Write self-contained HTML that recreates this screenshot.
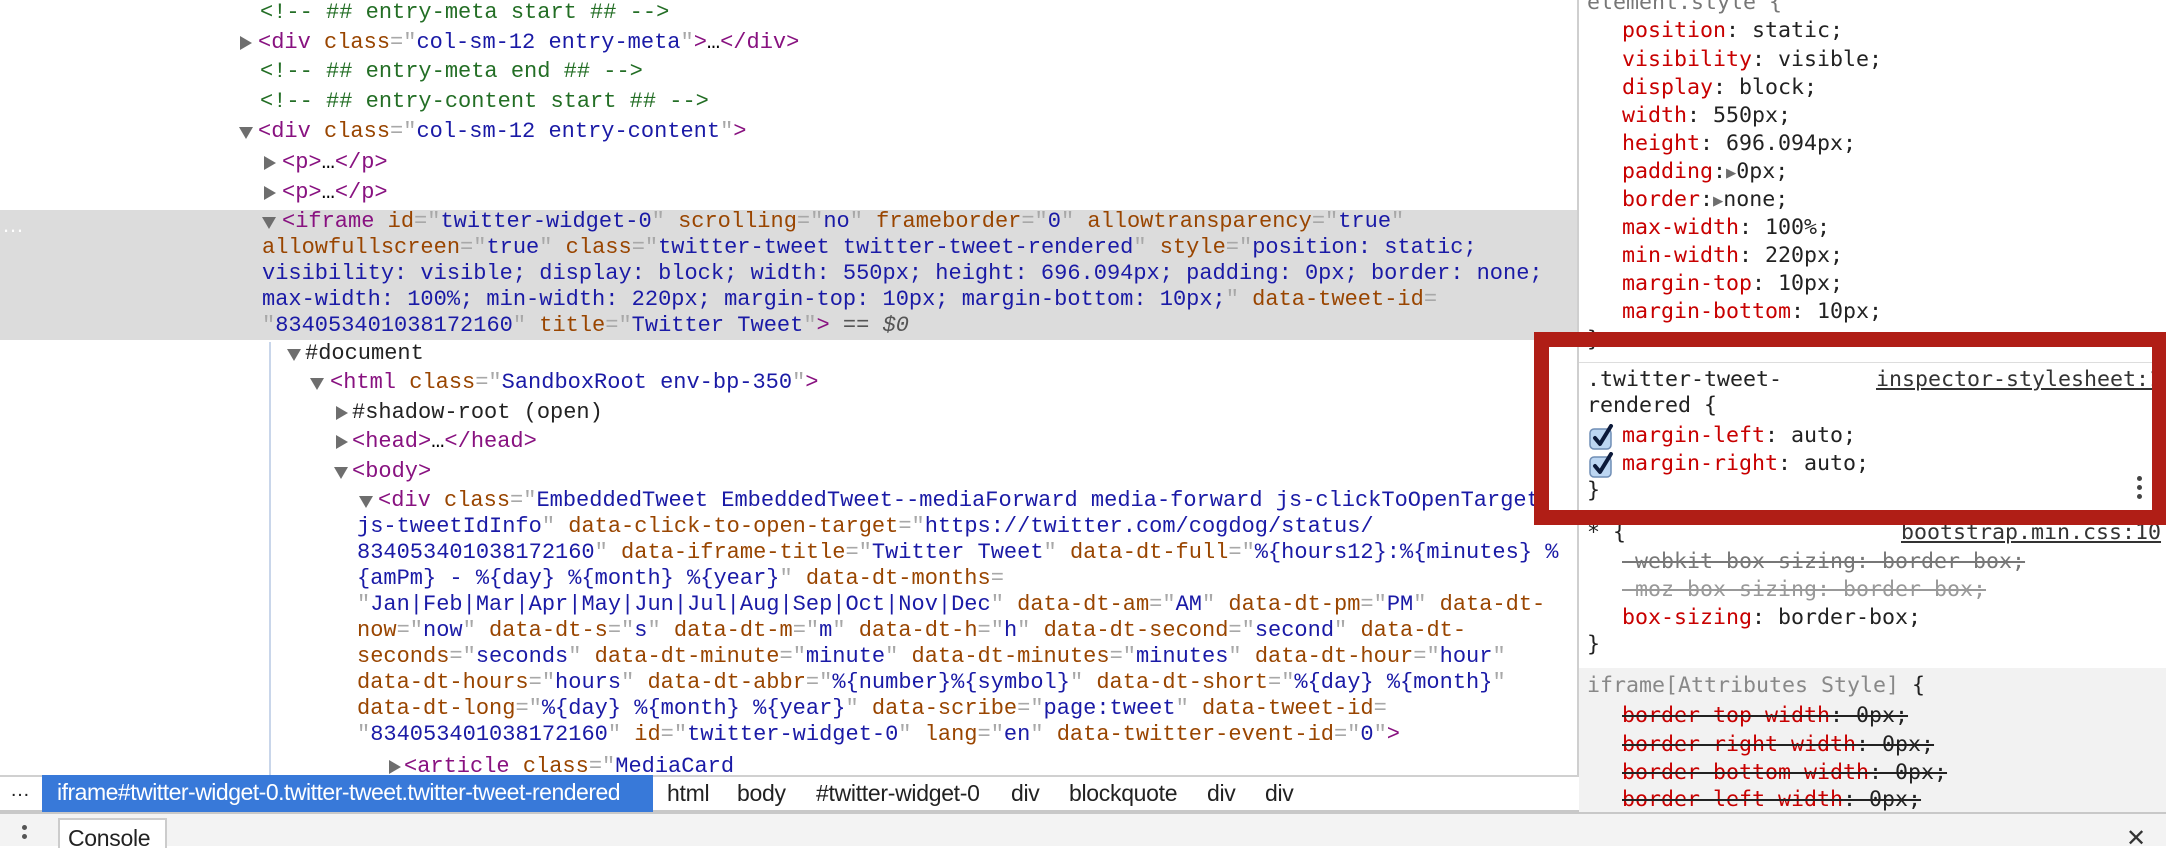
<!DOCTYPE html>
<html><head><meta charset="utf-8">
<style>
*{margin:0;padding:0;box-sizing:border-box}
body{width:2166px;height:846px;overflow:hidden;background:#fff;position:relative}
#left{position:absolute;left:0;top:0;width:1577px;height:775px;overflow:hidden;font-family:"Liberation Mono",monospace;font-size:22px;}
.l{position:absolute;white-space:pre;line-height:26px;height:26px}
.c{color:#236e25}.t{color:#881280}.a{color:#994500}.v{color:#1a1aa6}.p{color:#a8a8a8}.k{color:#222}
.tri{position:absolute;width:0;height:0}
.tr{border-top:7px solid transparent;border-bottom:7px solid transparent;border-left:12px solid #6e6e6e}
.td{border-left:7px solid transparent;border-right:7px solid transparent;border-top:12px solid #6e6e6e}
#right{position:absolute;left:1577px;top:0;width:589px;height:812px;border-left:2px solid #cfcfcf;overflow:hidden;font-family:"DejaVu Sans Mono",monospace;font-size:21.6px}
.r{position:absolute;white-space:pre;line-height:28px;color:#222}
.n{color:#c80000}.s{text-decoration:line-through}.g{color:#888}
.cr{position:absolute;top:3px;white-space:nowrap;letter-spacing:-0.3px}
</style></head><body>
<div id="left">
<div style="position:absolute;left:0;top:210px;width:1577px;height:130px;background:#dcdcdc"></div>
<div style="position:absolute;left:2px;top:212px;color:#fff;font-size:22px;font-family:'Liberation Sans',sans-serif;">…</div>
<div style="position:absolute;left:269px;top:342px;width:2px;height:433px;background:#c9d6ea"></div>

<div class="l c" style="left:260px;top:0px">&lt;!-- ## entry-meta start ## --&gt;</div>
<div class="tri tr" style="left:240px;top:36px"></div>
<div class="l" style="left:258px;top:30px"><span class="t">&lt;div</span> <span class="a">class</span><span class="p">="</span><span class="v">col-sm-12 entry-meta</span><span class="p">"</span><span class="t">&gt;</span>…<span class="t">&lt;/div&gt;</span></div>
<div class="l c" style="left:260px;top:59px">&lt;!-- ## entry-meta end ## --&gt;</div>
<div class="l c" style="left:260px;top:89px">&lt;!-- ## entry-content start ## --&gt;</div>
<div class="tri td" style="left:239px;top:127px"></div>
<div class="l" style="left:258px;top:119px"><span class="t">&lt;div</span> <span class="a">class</span><span class="p">="</span><span class="v">col-sm-12 entry-content</span><span class="p">"</span><span class="t">&gt;</span></div>
<div class="tri tr" style="left:264px;top:156px"></div>
<div class="l" style="left:282px;top:150px"><span class="t">&lt;p&gt;</span>…<span class="t">&lt;/p&gt;</span></div>
<div class="tri tr" style="left:264px;top:186px"></div>
<div class="l" style="left:282px;top:180px"><span class="t">&lt;p&gt;</span>…<span class="t">&lt;/p&gt;</span></div>
<div class="tri td" style="left:262px;top:217px"></div>
<div class="l" style="left:282px;top:209px"><span class="t">&lt;iframe</span> <span class="a">id</span><span class="p">="</span><span class="v">twitter-widget-0</span><span class="p">"</span> <span class="a">scrolling</span><span class="p">="</span><span class="v">no</span><span class="p">"</span> <span class="a">frameborder</span><span class="p">="</span><span class="v">0</span><span class="p">"</span> <span class="a">allowtransparency</span><span class="p">="</span><span class="v">true</span><span class="p">"</span></div>
<div class="l" style="left:262px;top:235px"><span class="a">allowfullscreen</span><span class="p">="</span><span class="v">true</span><span class="p">"</span> <span class="a">class</span><span class="p">="</span><span class="v">twitter-tweet twitter-tweet-rendered</span><span class="p">"</span> <span class="a">style</span><span class="p">="</span><span class="v">position: static;</span></div>
<div class="l v" style="left:262px;top:261px">visibility: visible; display: block; width: 550px; height: 696.094px; padding: 0px; border: none;</div>
<div class="l" style="left:262px;top:287px"><span class="v">max-width: 100%; min-width: 220px; margin-top: 10px; margin-bottom: 10px;</span><span class="p">"</span> <span class="a">data-tweet-id</span><span class="p">=</span></div>
<div class="l" style="left:262px;top:313px"><span class="p">"</span><span class="v">834053401038172160</span><span class="p">"</span> <span class="a">title</span><span class="p">="</span><span class="v">Twitter Tweet</span><span class="p">"</span><span class="t">&gt;</span> <span style="color:#555">== <i>$0</i></span></div>

<div class="tri td" style="left:287px;top:349px"></div>
<div class="l k" style="left:305px;top:341px">#document</div>
<div class="tri td" style="left:310px;top:378px"></div>
<div class="l" style="left:330px;top:370px"><span class="t">&lt;html</span> <span class="a">class</span><span class="p">="</span><span class="v">SandboxRoot env-bp-350</span><span class="p">"</span><span class="t">&gt;</span></div>
<div class="tri tr" style="left:336px;top:406px"></div>
<div class="l k" style="left:352px;top:400px">#shadow-root (open)</div>
<div class="tri tr" style="left:336px;top:435px"></div>
<div class="l" style="left:352px;top:429px"><span class="t">&lt;head&gt;</span>…<span class="t">&lt;/head&gt;</span></div>
<div class="tri td" style="left:334px;top:467px"></div>
<div class="l" style="left:352px;top:459px"><span class="t">&lt;body&gt;</span></div>
<div class="tri td" style="left:359px;top:496px"></div>
<div class="l" style="left:378px;top:488px"><span class="t">&lt;div</span> <span class="a">class</span><span class="p">="</span><span class="v">EmbeddedTweet EmbeddedTweet--mediaForward media-forward js-clickToOpenTarget</span></div>
<div class="l" style="left:357px;top:514px"><span class="v">js-tweetIdInfo</span><span class="p">"</span> <span class="a">data-click-to-open-target</span><span class="p">="</span><span class="v">https://twitter.com/cogdog/status/</span></div>
<div class="l" style="left:357px;top:540px"><span class="v">834053401038172160</span><span class="p">"</span> <span class="a">data-iframe-title</span><span class="p">="</span><span class="v">Twitter Tweet</span><span class="p">"</span> <span class="a">data-dt-full</span><span class="p">="</span><span class="v">%{hours12}:%{minutes} %</span></div>
<div class="l" style="left:357px;top:566px"><span class="v">{amPm} - %{day} %{month} %{year}</span><span class="p">"</span> <span class="a">data-dt-months</span><span class="p">=</span></div>
<div class="l" style="left:357px;top:592px"><span class="p">"</span><span class="v">Jan|Feb|Mar|Apr|May|Jun|Jul|Aug|Sep|Oct|Nov|Dec</span><span class="p">"</span> <span class="a">data-dt-am</span><span class="p">="</span><span class="v">AM</span><span class="p">"</span> <span class="a">data-dt-pm</span><span class="p">="</span><span class="v">PM</span><span class="p">"</span> <span class="a">data-dt-</span></div>
<div class="l" style="left:357px;top:618px"><span class="a">now</span><span class="p">="</span><span class="v">now</span><span class="p">"</span> <span class="a">data-dt-s</span><span class="p">="</span><span class="v">s</span><span class="p">"</span> <span class="a">data-dt-m</span><span class="p">="</span><span class="v">m</span><span class="p">"</span> <span class="a">data-dt-h</span><span class="p">="</span><span class="v">h</span><span class="p">"</span> <span class="a">data-dt-second</span><span class="p">="</span><span class="v">second</span><span class="p">"</span> <span class="a">data-dt-</span></div>
<div class="l" style="left:357px;top:644px"><span class="a">seconds</span><span class="p">="</span><span class="v">seconds</span><span class="p">"</span> <span class="a">data-dt-minute</span><span class="p">="</span><span class="v">minute</span><span class="p">"</span> <span class="a">data-dt-minutes</span><span class="p">="</span><span class="v">minutes</span><span class="p">"</span> <span class="a">data-dt-hour</span><span class="p">="</span><span class="v">hour</span><span class="p">"</span></div>
<div class="l" style="left:357px;top:670px"><span class="a">data-dt-hours</span><span class="p">="</span><span class="v">hours</span><span class="p">"</span> <span class="a">data-dt-abbr</span><span class="p">="</span><span class="v">%{number}%{symbol}</span><span class="p">"</span> <span class="a">data-dt-short</span><span class="p">="</span><span class="v">%{day} %{month}</span><span class="p">"</span></div>
<div class="l" style="left:357px;top:696px"><span class="a">data-dt-long</span><span class="p">="</span><span class="v">%{day} %{month} %{year}</span><span class="p">"</span> <span class="a">data-scribe</span><span class="p">="</span><span class="v">page:tweet</span><span class="p">"</span> <span class="a">data-tweet-id</span><span class="p">=</span></div>
<div class="l" style="left:357px;top:722px"><span class="p">"</span><span class="v">834053401038172160</span><span class="p">"</span> <span class="a">id</span><span class="p">="</span><span class="v">twitter-widget-0</span><span class="p">"</span> <span class="a">lang</span><span class="p">="</span><span class="v">en</span><span class="p">"</span> <span class="a">data-twitter-event-id</span><span class="p">="</span><span class="v">0</span><span class="p">"</span><span class="t">&gt;</span></div>
<div class="tri tr" style="left:389px;top:760px"></div>
<div class="l" style="left:404px;top:754px"><span class="t">&lt;article</span> <span class="a">class</span><span class="p">="</span><span class="v">MediaCard</span></div>
</div>

<div id="right">
<div class="r" style="left:8px;top:-11px;color:#777">element.style {</div>
<div class="r" style="left:43px;top:17px"><span class="n">position</span>: static;</div>
<div class="r" style="left:43px;top:46px"><span class="n">visibility</span>: visible;</div>
<div class="r" style="left:43px;top:74px"><span class="n">display</span>: block;</div>
<div class="r" style="left:43px;top:102px"><span class="n">width</span>: 550px;</div>
<div class="r" style="left:43px;top:130px"><span class="n">height</span>: 696.094px;</div>
<div class="r" style="left:43px;top:158px"><span class="n">padding</span>:<span style="color:#6e6e6e;font-size:17px">▶</span>0px;</div>
<div class="r" style="left:43px;top:186px"><span class="n">border</span>:<span style="color:#6e6e6e;font-size:17px">▶</span>none;</div>
<div class="r" style="left:43px;top:214px"><span class="n">max-width</span>: 100%;</div>
<div class="r" style="left:43px;top:242px"><span class="n">min-width</span>: 220px;</div>
<div class="r" style="left:43px;top:270px"><span class="n">margin-top</span>: 10px;</div>
<div class="r" style="left:43px;top:298px"><span class="n">margin-bottom</span>: 10px;</div>
<div class="r" style="left:8px;top:326px">}</div>
<div style="position:absolute;left:0;top:362px;width:589px;height:1px;background:#ddd"></div>
<div class="r" style="left:8px;top:366px">.twitter-tweet-</div>
<div class="r" style="left:297px;top:366px;text-decoration:underline;color:#333">inspector-stylesheet:1</div>
<div class="r" style="left:8px;top:392px">rendered {</div>
<svg style="position:absolute;left:10px;top:424px" width="26" height="26" viewBox="0 0 26 26"><rect x="1" y="5" width="21" height="20" rx="4" fill="#bcd6f2" stroke="#6f8db5" stroke-width="1.5"/><path d="M6 14 L11 20 L22 2" fill="none" stroke="#0c1a3a" stroke-width="4" stroke-linecap="round" stroke-linejoin="round"/></svg>
<div class="r" style="left:43px;top:422px"><span class="n">margin-left</span>: auto;</div>
<svg style="position:absolute;left:10px;top:452px" width="26" height="26" viewBox="0 0 26 26"><rect x="1" y="5" width="21" height="20" rx="4" fill="#bcd6f2" stroke="#6f8db5" stroke-width="1.5"/><path d="M6 14 L11 20 L22 2" fill="none" stroke="#0c1a3a" stroke-width="4" stroke-linecap="round" stroke-linejoin="round"/></svg>
<div class="r" style="left:43px;top:450px"><span class="n">margin-right</span>: auto;</div>
<div class="r" style="left:8px;top:477px">}</div>
<div style="position:absolute;left:558px;top:476px;width:5px;height:5px;border-radius:50%;background:#444;box-shadow:0 9px 0 #444,0 18px 0 #444"></div>
<div class="r" style="left:8px;top:519px">* {</div>
<div class="r" style="left:322px;top:519px;text-decoration:underline;color:#333">bootstrap.min.css:10</div>
<div class="r s" style="left:43px;top:548px;color:#777">-webkit-box-sizing: border-box;</div>
<div class="r s" style="left:43px;top:576px;color:#999">-moz-box-sizing: border-box;</div>
<div class="r" style="left:43px;top:604px"><span class="n">box-sizing</span>: border-box;</div>
<div class="r" style="left:8px;top:631px">}</div>
<div style="position:absolute;left:0;top:668px;width:589px;height:144px;background:#f2f2f2"></div>
<div class="r" style="left:8px;top:672px"><span class="g">iframe[Attributes Style]</span> {</div>
<div class="r s" style="left:43px;top:702px"><span class="n">border-top-width</span>: 0px;</div>
<div class="r s" style="left:43px;top:731px"><span class="n">border-right-width</span>: 0px;</div>
<div class="r s" style="left:43px;top:759px"><span class="n">border-bottom-width</span>: 0px;</div>
<div class="r s" style="left:43px;top:786px"><span class="n">border-left-width</span>: 0px;</div>
</div>

<div style="position:absolute;left:1534px;top:332px;width:632px;height:193px;border:15px solid #b01e16;border-right-width:14px"></div>

<div style="position:absolute;left:0;top:775px;width:1579px;height:37px;background:#fff;border-top:2px solid #d0d0d0;border-bottom:2px solid #c8c8c8;font-family:'Liberation Sans',sans-serif;font-size:23px;color:#222">
 <div style="position:absolute;left:10px;top:2px;font-size:20px">…</div>
 <div style="position:absolute;left:42px;top:-2px;width:611px;height:37px;background:#3879d9;color:#fff;padding:4px 0 0 15px;white-space:nowrap;letter-spacing:-0.5px;overflow:hidden">iframe#twitter-widget-0.twitter-tweet.twitter-tweet-rendered</div>
 <div class="cr" style="left:667px">html</div>
 <div class="cr" style="left:737px">body</div>
 <div class="cr" style="left:816px">#twitter-widget-0</div>
 <div class="cr" style="left:1011px">div</div>
 <div class="cr" style="left:1069px">blockquote</div>
 <div class="cr" style="left:1207px">div</div>
 <div class="cr" style="left:1265px">div</div>
</div>
<div style="position:absolute;left:0;top:812px;width:2166px;height:34px;background:#f3f3f3;border-top:2px solid #c8c8c8"></div>
<div style="position:absolute;left:22px;top:825px;width:5px;height:5px;border-radius:50%;background:#555;box-shadow:0 9px 0 #555"></div>
<div style="position:absolute;left:58px;top:818px;width:109px;height:30px;background:#fff;border:2px solid #ccc;border-bottom:none;font-family:'Liberation Sans',sans-serif;font-size:23px;padding:5px 0 0 8px;color:#222;letter-spacing:-0.3px">Console</div>
<div style="position:absolute;left:2126px;top:824px;font-family:'DejaVu Sans',sans-serif;font-size:24px;color:#333">✕</div>
</body></html>
